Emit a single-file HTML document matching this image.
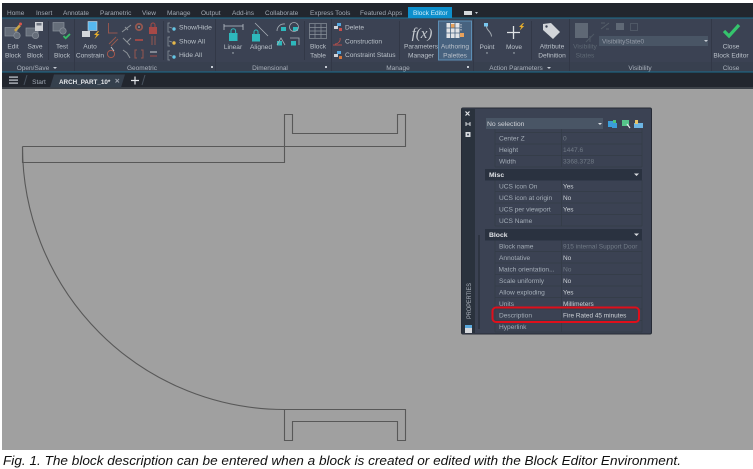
<!DOCTYPE html>
<html><head><meta charset="utf-8"><title>Block Editor</title>
<style>
html,body{margin:0;padding:0;background:#fff;width:753px;height:469px;overflow:hidden}
svg{display:block}
text{font-family:"Liberation Sans",sans-serif;font-size:6.6px;fill:#bcc2cb}
.c{text-anchor:middle}
.t{fill:#a3aab4;font-size:6.5px}
.p{fill:#aab1bb;font-size:6.5px}
.l{fill:#a5adb8;font-size:6.6px}
.v{fill:#cdd1d7;font-size:6.45px}
.d{fill:#727a87;font-size:6.6px}
.h{fill:#dfe2e7;font-weight:bold;font-size:6.8px}
.dis{fill:#5f6875}
</style></head><body>
<svg width="753" height="469" viewBox="0 0 753 469" xmlns="http://www.w3.org/2000/svg">
<defs><filter id="b" x="-2%" y="-2%" width="104%" height="104%"><feGaussianBlur stdDeviation="0.35"/></filter></defs>
<rect width="753" height="469" fill="#fff"/>
<rect x="2" y="88" width="751" height="362" fill="#a0a0a0"/>

<!-- drawing -->
<g fill="none" stroke="#585858" stroke-width="1.100" filter="url(#b)">
<path d="M22.5 146.500H405.500V114.500H397.500V133.500H292.500V114.500H284.500V162.500H22.500V146.500"/>
<path d="M22.500 146.500A262 263 0 0 0 284.500 409.500H405.500V440.500H397.500V421.500H292.500V440.500H284.500V409.500"/>
</g>

<g filter="url(#b)">
<!-- top bands -->
<rect x="2" y="3" width="751" height="15" fill="#20262f"/>
<rect x="2" y="18" width="751" height="54" fill="#3a4352"/>
<rect x="2" y="17.500" width="751" height="1" fill="#1c6d8f"/>
<rect x="2" y="62" width="751" height="10" fill="#384150"/>
<rect x="2" y="71.500" width="751" height="1" fill="#1c6d8f"/>
<rect x="2" y="72.500" width="751" height="15" fill="#20262f"/>
<rect x="2" y="87" width="751" height="2" fill="#3a3f46"/>

<!-- tabs -->
<text class="t" x="7" y="15">Home</text>
<text class="t" x="36" y="15">Insert</text>
<text class="t" x="63" y="15">Annotate</text>
<text class="t" x="100" y="15">Parametric</text>
<text class="t" x="142" y="15">View</text>
<text class="t" x="167" y="15">Manage</text>
<text class="t" x="201" y="15">Output</text>
<text class="t" x="232" y="15">Add-ins</text>
<text class="t" x="265" y="15">Collaborate</text>
<text class="t" x="310" y="15">Express Tools</text>
<text class="t" x="360" y="15">Featured Apps</text>
<rect x="408" y="7" width="44" height="11" fill="#0a8fcc"/>
<text x="413" y="15" style="fill:#d5eef9;font-size:6.500px">Block Editor</text>
<rect x="464" y="11" width="8" height="4" fill="#d5d8dc"/>
<path d="M475 12h3l-1.500 2z" fill="#c5cbd3"/>

<!-- panel separators -->
<g fill="#303846">
<rect x="74" y="19" width="1" height="52"/><rect x="215" y="19" width="1" height="52"/>
<rect x="331" y="19" width="1" height="52"/><rect x="473" y="19" width="1" height="52"/>
<rect x="569" y="19" width="1" height="52"/><rect x="711" y="19" width="1" height="52"/>
<rect x="48" y="21" width="1" height="39"/><rect x="163" y="21" width="1" height="39"/>
<rect x="304" y="21" width="1" height="39"/><rect x="399" y="21" width="1" height="39"/>
<rect x="531" y="21" width="1" height="39"/>
</g>

<!-- Edit Block / Save Block / Test Block icons -->
<g fill="#666e7a" stroke="#8b929c" stroke-width=".7">
<rect x="5" y="27.500" width="12" height="8.500"/><circle cx="17" cy="35.500" r="3.200"/>
<rect x="26" y="28" width="12" height="8"/><circle cx="35.500" cy="35.500" r="3.200"/>
<rect x="53" y="22.500" width="11" height="8.500"/><circle cx="63" cy="31" r="3.200"/>
</g>
<path d="M14 30l5-5.500 1.800 1.800-5 5.500z" fill="#c9a54a"/><circle cx="20.500" cy="24" r="1.500" fill="#d9534c"/>
<rect x="35" y="22" width="8" height="9" fill="#cfd2d7"/><rect x="36.500" y="23" width="5" height="2.500" fill="#6f7783"/>
<path d="M63.500 36l2.200 2.200L70 34" fill="none" stroke="#38bc66" stroke-width="1.800"/>

<!-- Auto constrain -->
<rect x="88" y="21.500" width="9" height="9" fill="#57b8ef" stroke="#d0d6dc" stroke-width=".6"/>
<rect x="82" y="31" width="8" height="6" fill="#d4d7db"/>
<path d="M98 31l-4 4h2.500l-2 4 5-5h-2.500l2-3z" fill="#e8ae2a"/>

<!-- Geometric -->
<g fill="none" stroke-width="1">
<path d="M108.500 23v10h9" stroke="#94574f"/><path d="M122 32l9-7M125 27l3 3" stroke="#8d9299"/>
<circle cx="139" cy="27" r="3.200" stroke="#94574f" stroke-width="1.800"/><circle cx="139" cy="27" r=".8" fill="#c4c8cd" stroke="none"/>
<path d="M111 46l7-7M109 44l7-7" stroke="#94574f"/><path d="M123 38l4 4 4-4M127 42l3 3" stroke="#8d9299"/>
<path d="M135 40h8" stroke="#a64a46" stroke-width="1.800"/><path d="M152 36v9M155 36v9" stroke="#94574f"/>
<circle cx="111" cy="54" r="3.600" stroke="#a5564c"/><path d="M111 47l3 4" stroke="#bcc0c6"/>
<path d="M123 50l4 3 3 5" stroke="#8d9299"/>
<path d="M137 50h-2v8h2M141 50h2v8h-2" stroke="#94574f"/>
<path d="M150 52h7" stroke="#c8ccd1"/><path d="M150 56h7" stroke="#a64a46"/>
</g>
<path d="M149 27h8v7h-8z" fill="#a64a46"/><path d="M151 27v-2a2 2 0 0 1 4 0v2" fill="none" stroke="#a64a46"/>

<!-- Show/Hide -->
<g fill="none" stroke="#8b929c" stroke-width=".8">
<path d="M170 23h-2v9h2M169 27l3 1"/><path d="M170 37h-2v9h2M169 41l3 1"/><path d="M170 51h-2v9h2M169 55l3 1"/>
</g>
<circle cx="174" cy="29" r="1.700" fill="#65c6e6"/><circle cx="174" cy="43" r="1.700" fill="#e6b84c"/><circle cx="174" cy="57" r="1.700" fill="#65c6e6"/>

<!-- Dimensional -->
<path d="M224 24v6M243 24v6M224 26h19" stroke="#bcc2cb" stroke-width=".8" fill="none"/>
<g fill="#2fb8bc">
<rect x="229" y="33" width="8.500" height="8"/><rect x="252" y="34" width="8" height="7.500"/>
<rect x="281" y="27" width="5" height="4"/><rect x="293" y="27" width="5" height="4"/>
<rect x="277" y="41" width="5" height="4.500"/><rect x="291" y="41" width="5" height="4.500"/>
</g>
<g fill="none" stroke="#2fb8bc" stroke-width="1">
<path d="M231 33v-2a2.300 2.300 0 0 1 4.600 0v2"/><path d="M254 34v-2a2 2 0 0 1 4 0v2"/>
</g>
<g fill="none" stroke="#a8aeb6" stroke-width=".8">
<path d="M255 23l13 13"/><path d="M277 31a7 7 0 0 1 8-7"/><circle cx="294" cy="27" r="4.500"/>
<path d="M277 45l4-7 4 7"/><path d="M290 38h9v7"/>
</g>

<!-- Block Table -->
<g fill="none" stroke="#8b929c" stroke-width=".7">
<rect x="309.500" y="23.500" width="17" height="15"/>
<path d="M309.500 27.500h17M309.500 31h17M309.500 34.500h17M315 24v14M321 24v14"/>
</g>

<!-- Manage -->
<g fill="#d0d3d8"><rect x="334" y="26" width="4" height="3"/><rect x="334" y="54" width="4" height="3"/></g>
<g fill="#57a8e0"><rect x="337" y="23" width="4" height="3"/><rect x="337" y="51" width="4" height="3"/></g>
<rect x="339" y="28" width="3" height="3" fill="#c9504c"/><rect x="339" y="56" width="3" height="3" fill="#d4743a"/>
<path d="M335 44c3 0 6-3 5-6M333 45h9" fill="none" stroke="#b8504c" stroke-width=".9"/>

<text x="422" y="38" class="c" style="font-family:'Liberation Serif',serif;font-style:italic;font-size:15px;fill:#c6cad0">f(x)</text>
<rect x="438.500" y="21" width="33" height="39" fill="#46627f" stroke="#5b8eb5"/>
<rect x="446.500" y="23" width="13" height="15" fill="#e2e4e7"/>
<rect x="451" y="24" width="3.500" height="4" fill="#e8a25c"/>
<path d="M450.500 23v15M455 23v15M446.500 28h13M446.500 33h13" stroke="#46627f" stroke-width=".8"/>
<rect x="460" y="33" width="4" height="4" fill="#e8a25c"/>
<path d="M461 24v7" stroke="#cfd3d8" stroke-dasharray="1.500 1"/>

<!-- Action params -->
<rect x="484" y="23" width="4" height="3.500" fill="#79c6ee"/>
<path d="M486.500 26.500c0 4 5 5 5 10" fill="none" stroke="#a2a8b0"/>
<path d="M513.500 26v13M507 32.500h13" stroke="#dfe2e5" stroke-width="1.300"/>
<path d="M523 23l-4 4h2.200l-1.500 3.500 4.500-4.500h-2.200l2-3z" fill="#e8ae2a"/>
<path d="M543 24l8-1 9 9-7 7-10-9z" fill="#d2d5d9"/><circle cx="546.500" cy="26.500" r="1.200" fill="#3a4352"/>

<!-- Visibility -->
<rect x="575" y="23" width="13" height="15" fill="#5f6774"/>
<path d="M586 42l8-8M590 36v6" stroke="#505866" fill="none"/>
<path d="M601 29l8-6M601 23h4M606 29h3" stroke="#565e6a" fill="none"/>
<rect x="616" y="23" width="8" height="7" fill="#5f6774"/>
<rect x="630.500" y="23.500" width="7" height="7" fill="none" stroke="#505866"/>
<rect x="599" y="36" width="109" height="10" fill="#4a5465"/>
<text x="602" y="43.500" style="fill:#959da9;font-size:6.500px">VisibilityState0</text>
<path d="M704 40h4l-2 2z" fill="#c5cbd3"/>
<path d="M724 31l5 5 10-11" fill="none" stroke="#35c46d" stroke-width="3.200"/>

<!-- ribbon labels -->
<text class="c" x="13" y="48.500">Edit</text><text class="c" x="13" y="57.500">Block</text>
<text class="c" x="35" y="48.500">Save</text><text class="c" x="35" y="57.500">Block</text>
<text class="c" x="62" y="48.500">Test</text><text class="c" x="62" y="57.500">Block</text>
<text class="c" x="90" y="48.500">Auto</text><text class="c" x="90" y="57.500">Constrain</text>
<text x="179" y="29.500" style="font-size:6.800px">Show/Hide</text><text x="179" y="43.500" style="font-size:6.800px">Show All</text><text x="179" y="57" style="font-size:6.800px">Hide All</text>
<text class="c" x="233" y="49">Linear</text><text class="c" x="261" y="49">Aligned</text>
<text class="c" x="318" y="48.500">Block</text><text class="c" x="318" y="57.500">Table</text>
<text x="345" y="29.500">Delete</text><text x="345" y="43.500">Construction</text><text x="345" y="57">Constraint Status</text>
<text class="c" x="421" y="48.500">Parameters</text><text class="c" x="421" y="57.500">Manager</text>
<text class="c" x="455" y="48.500">Authoring</text><text class="c" x="455" y="57.500">Palettes</text>
<text class="c" x="487" y="49">Point</text><text class="c" x="514" y="49">Move</text>
<text class="c" x="552" y="48.500">Attribute</text><text class="c" x="552" y="57.500">Definition</text>
<text class="c dis" x="585" y="48.500">Visibility</text><text class="c dis" x="585" y="57.500">States</text>
<text class="c" x="731" y="48.500">Close</text><text class="c" x="731" y="57.500">Block Editor</text>
<g fill="#bcc2cb"><circle cx="233" cy="53" r=".7"/><circle cx="487" cy="53" r=".7"/><circle cx="514" cy="53" r=".7"/></g>

<!-- panel titles -->
<text class="p c" x="33" y="70">Open/Save</text>
<text class="p c" x="142" y="70">Geometric</text>
<text class="p c" x="270" y="70">Dimensional</text>
<text class="p c" x="398" y="70">Manage</text>
<text class="p c" x="516" y="70">Action Parameters</text>
<text class="p c" x="640" y="70">Visibility</text>
<text class="p c" x="731" y="70">Close</text>
<g fill="#c5cbd3"><path d="M53 67h4l-2 2zM547 67h4l-2 2z"/><rect x="211" y="66" width="2" height="2"/><rect x="325" y="66" width="2" height="2"/><rect x="467" y="66" width="2" height="2"/></g>

<!-- doc tab bar -->
<g fill="#c9ced5"><rect x="9" y="76.500" width="9" height="1.200"/><rect x="9" y="79.500" width="9" height="1.200"/><rect x="9" y="82.500" width="9" height="1.200"/></g>
<path d="M24 85l3-10M142 85l3-10" stroke="#4a525e" fill="none"/>
<text class="t c" x="39" y="84">Start</text>
<path d="M50 87.500l4-13h71l-4 13z" fill="#363f4d"/>
<text x="59" y="84" style="fill:#e8eaed;font-weight:bold;font-size:6.300px">ARCH_PART_10*</text>
<path d="M115.500 79l3.500 3.500M119 79l-3.500 3.500" stroke="#9aa1ab" fill="none"/>
<path d="M135 76.500v8M131 80.500h8" stroke="#e4e6e9" stroke-width="1.200" fill="none"/>

<!-- Properties palette -->
<rect x="461.500" y="108" width="190" height="226" rx="1.500" fill="#3a4352" stroke="#262c35"/>
<rect x="462" y="109" width="13" height="224" fill="#2b323e"/>
<path d="M465.500 111.500l4 4M469.500 111.500l-4 4" stroke="#e6e8ea" stroke-width="1.200" fill="none"/>
<path d="M466 122v4M470 122v4M466 124h4" stroke="#d8dbdf" fill="none"/>
<rect x="465.500" y="132" width="5" height="5" fill="#d8dbdf"/><circle cx="468" cy="134.500" r="1" fill="#3a4352"/>
<rect x="478" y="235" width="2" height="94" fill="#2e3643"/>
<text transform="translate(471 319) rotate(-90)" textLength="36" lengthAdjust="spacingAndGlyphs" style="fill:#aeb4bd;font-size:6.500px">PROPERTIES</text>
<rect x="465" y="325" width="7" height="8" fill="#d5d8dc"/><rect x="465" y="325" width="7" height="3" fill="#5aa8dc"/>

<rect x="486" y="118" width="117" height="11" fill="#4a5465"/>
<text x="487" y="126" style="fill:#cfd3d8;font-size:6.800px">No selection</text>
<path d="M598 123h4l-2 2z" fill="#d8dbdf"/>
<rect x="608" y="121" width="5" height="6" fill="#3b9dd9"/><rect x="612" y="123" width="5" height="5" fill="#3b9dd9"/><rect x="613" y="120" width="3" height="3" fill="#4cc47a"/>
<rect x="622" y="120" width="7" height="6" fill="#54c48a"/><path d="M627 124l3 4" stroke="#e4e6e9" stroke-width="1.200"/>
<rect x="634" y="123" width="9" height="5" fill="#6db5e3"/><rect x="635" y="120" width="3" height="4" fill="#e6c56a"/>

<!-- rows -->
<g stroke="#333b48" stroke-width=".7" fill="none">
<path d="M495 132.500H642M495 144H642M495 155.500H642M495 167H642"/>
<path d="M495 191.500H642M495 203H642M495 214.500H642M495 226H642"/>
<path d="M495 251.500H642M495 263H642M495 274.500H642M495 286H642M495 297.500H642M495 309H642M495 320.500H642M495 332H642"/>
<path d="M561.500 129V167M561.500 180V226M561.500 240V332M495 129V167M495 180V226M495 240V332M642 129V167M642 180V226M642 240V332"/>
</g>
<rect x="485" y="169" width="157" height="11.500" fill="#2c333f"/>
<rect x="485" y="229" width="157" height="11.500" fill="#2c333f"/>
<text class="h" x="489" y="177">Misc</text>
<text class="h" x="489" y="237">Block</text>
<path d="M634 173.500h5l-2.500 2.500zM634 233.500h5l-2.500 2.500z" fill="#d8dbdf"/>

<text class="l" x="499" y="140.500">Center Z</text><text class="d" x="563" y="140.500">0</text>
<text class="l" x="499" y="152">Height</text><text class="d" x="563" y="152">1447.6</text>
<text class="l" x="499" y="163.500">Width</text><text class="d" x="563" y="163.500">3368.3728</text>
<text class="l" x="499" y="188.500">UCS icon On</text><text class="v" x="563" y="188.500">Yes</text>
<text class="l" x="499" y="200">UCS icon at origin</text><text class="v" x="563" y="200">No</text>
<text class="l" x="499" y="211.500">UCS per viewport</text><text class="v" x="563" y="211.500">Yes</text>
<text class="l" x="499" y="223">UCS Name</text>
<text class="l" x="499" y="248.500">Block name</text><text class="d" x="563" y="248.500" style="font-size:6.500px">915 internal Support Door</text>
<text class="l" x="499" y="260">Annotative</text><text class="v" x="563" y="260">No</text>
<text class="l" x="498.500" y="271.500">Match orientation...</text><text class="d" x="563" y="271.500">No</text>
<text class="l" x="499" y="283">Scale uniformly</text><text class="v" x="563" y="283">No</text>
<text class="l" x="499" y="294.500">Allow exploding</text><text class="v" x="563" y="294.500">Yes</text>
<text class="l" x="499" y="306">Units</text><text class="v" x="563" y="306">Millimeters</text>
<text class="l" x="499" y="317.500">Description</text><text class="v" x="563" y="317.500">Fire Rated 45 minutes</text>
<text class="l" x="499" y="329">Hyperlink</text>
</g>
<rect x="492.500" y="307.500" width="146.500" height="14.500" rx="3.500" fill="none" stroke="#df0f1b" stroke-width="2"/>

<!-- caption -->
<text x="3" y="465" textLength="678" lengthAdjust="spacingAndGlyphs" style="fill:#111;font-style:italic;font-size:13px">Fig. 1. The block description can be entered when a block is created or edited with the Block Editor Environment.</text>
</svg>
</body></html>
